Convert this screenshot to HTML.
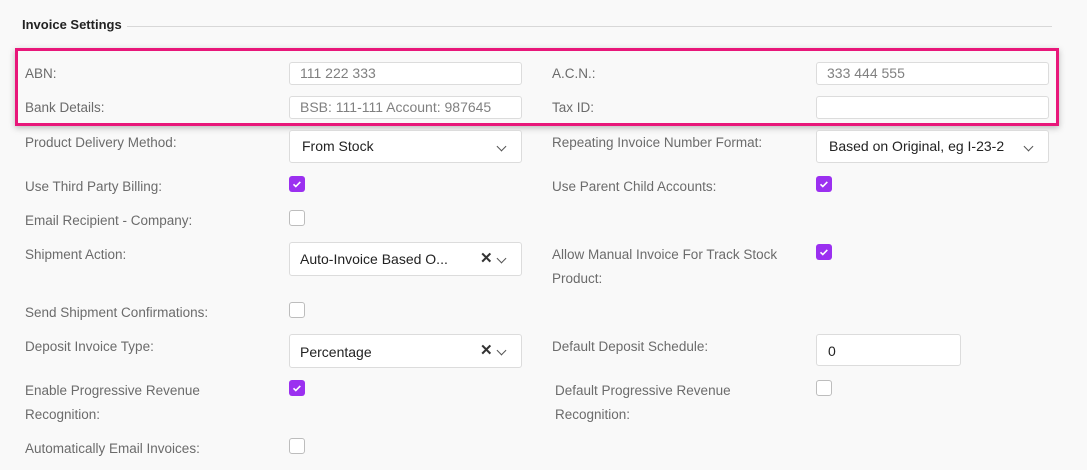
<!DOCTYPE html>
<html><head><meta charset="utf-8"><style>
body{margin:0;width:1087px;height:470px;background:#f9f9f9;font-family:"Liberation Sans",sans-serif;position:relative;overflow:hidden}
.a{position:absolute}
.l{position:absolute;font-size:13.5px;color:#6b6b6b;line-height:24px}
.in{position:absolute;background:#fff;border:1px solid #dcdcdc;border-radius:3px;box-sizing:border-box;font-size:14px;color:#808080;padding-left:10px;line-height:21px}
.sel{position:absolute;background:#fff;border:1px solid #dcdcdc;border-radius:3px;box-sizing:border-box;font-size:14px;color:#222;padding-left:11px}
.cb{position:absolute;width:16px;height:16px;border-radius:3px;box-sizing:border-box}
.on{background:#9b30f0}
.off{background:#fff;border:1px solid #bdbdbd}
.chev{position:absolute;width:6px;height:6px;border-right:1.3px solid #555;border-bottom:1.3px solid #555;transform:rotate(45deg)}
.x{position:absolute;font-size:15px;font-weight:bold;color:#333}
</style></head><body>
<div class="a" style="left:22px;top:17px;font-size:13px;font-weight:bold;color:#222">Invoice Settings</div>
<div class="a" style="left:127px;top:26px;width:925px;height:1px;background:#d8d8d8"></div>
<div class="a" style="left:15px;top:48px;width:1044px;height:78px;border:3px solid #e8177a;box-sizing:border-box;box-shadow:0 2px 6px rgba(0,0,0,.25)"></div>

<div class="l" style="left:25px;top:62px">ABN:</div>
<div class="in" style="left:289px;top:62px;width:233px;height:23px">111 222 333</div>
<div class="l" style="left:552px;top:62px">A.C.N.:</div>
<div class="in" style="left:816px;top:62px;width:233px;height:23px">333 444 555</div>
<div class="l" style="left:25px;top:96px">Bank Details:</div>
<div class="in" style="left:289px;top:96px;width:233px;height:23px">BSB: 111-111 Account: 987645</div>
<div class="l" style="left:552px;top:96px">Tax ID:</div>
<div class="in" style="left:816px;top:96px;width:233px;height:23px"></div>

<div class="l" style="left:25px;top:131px">Product Delivery Method:</div>
<div class="sel" style="left:289px;top:130px;width:233px;height:33px;line-height:31px;padding-left:12px">From Stock</div>
<div class="chev" style="left:498px;top:143px"></div>
<div class="l" style="left:552px;top:131px">Repeating Invoice Number Format:</div>
<div class="sel" style="left:816px;top:130px;width:233px;height:33px;line-height:31px;padding-left:12px">Based on Original, eg I-23-2</div>
<div class="chev" style="left:1025px;top:143px"></div>

<div class="l" style="left:25px;top:175px">Use Third Party Billing:</div>
<div class="cb on" style="left:289px;top:176px"><svg width="16" height="16"><path d="M4.5 8.3l2.3 2.2 4.5-4.6" stroke="#fff" stroke-width="1.6" fill="none"/></svg></div>
<div class="l" style="left:552px;top:175px">Use Parent Child Accounts:</div>
<div class="cb on" style="left:816px;top:176px"><svg width="16" height="16"><path d="M4.5 8.3l2.3 2.2 4.5-4.6" stroke="#fff" stroke-width="1.6" fill="none"/></svg></div>

<div class="l" style="left:25px;top:209px">Email Recipient - Company:</div>
<div class="cb off" style="left:289px;top:210px"></div>

<div class="l" style="left:25px;top:243px">Shipment Action:</div>
<div class="sel" style="left:289px;top:242px;width:233px;height:34px;line-height:33px;padding-left:10px">Auto-Invoice Based O...</div>
<div class="x" style="left:480px;top:249px">✕</div>
<div class="chev" style="left:498px;top:255px"></div>
<div class="l" style="left:552px;top:243px">Allow Manual Invoice For Track Stock</div>
<div class="l" style="left:552px;top:267px">Product:</div>
<div class="cb on" style="left:816px;top:244px"><svg width="16" height="16"><path d="M4.5 8.3l2.3 2.2 4.5-4.6" stroke="#fff" stroke-width="1.6" fill="none"/></svg></div>

<div class="l" style="left:25px;top:301px">Send Shipment Confirmations:</div>
<div class="cb off" style="left:289px;top:302px"></div>

<div class="l" style="left:25px;top:335px">Deposit Invoice Type:</div>
<div class="sel" style="left:289px;top:334px;width:233px;height:34px;line-height:35px;padding-left:10px">Percentage</div>
<div class="x" style="left:480px;top:341px">✕</div>
<div class="chev" style="left:498px;top:347px"></div>
<div class="l" style="left:552px;top:335px">Default Deposit Schedule:</div>
<div class="sel" style="left:816px;top:334px;width:145px;height:32px;line-height:33px;padding-left:11px">0</div>

<div class="l" style="left:25px;top:379px">Enable Progressive Revenue</div>
<div class="l" style="left:25px;top:403px">Recognition:</div>
<div class="cb on" style="left:289px;top:380px"><svg width="16" height="16"><path d="M4.5 8.3l2.3 2.2 4.5-4.6" stroke="#fff" stroke-width="1.6" fill="none"/></svg></div>
<div class="l" style="left:555px;top:379px">Default Progressive Revenue</div>
<div class="l" style="left:555px;top:403px">Recognition:</div>
<div class="cb off" style="left:816px;top:380px"></div>

<div class="l" style="left:25px;top:437px">Automatically Email Invoices:</div>
<div class="cb off" style="left:289px;top:438px"></div>
</body></html>
